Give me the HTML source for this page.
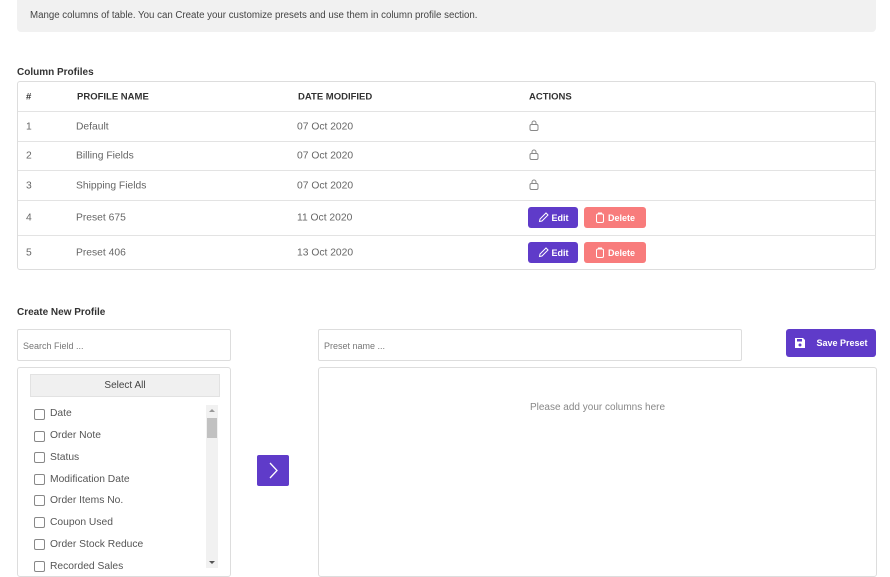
<!DOCTYPE html>
<html><head><style>
*{box-sizing:border-box;margin:0;padding:0}
body{width:890px;height:570px;overflow:hidden;background:#fff;font-family:"Liberation Sans",sans-serif;color:#555;position:relative}
.a{position:absolute}
.top{left:17px;top:0;width:859px;height:32px;background:#f1f1f1;border-radius:0 0 4px 4px;font-size:9.7px;color:#444;padding:10px 0 0 13px}
h4{position:absolute;font-size:10px;color:#333;font-weight:bold}
.tbl{left:17px;top:81px;width:859px;height:189px;border:1px solid #ddd;border-radius:3px}
.row{position:absolute;left:0;width:857px;border-bottom:1px solid #e3e3e3;font-size:10.3px;color:#666}
.row span{position:absolute;top:50%;transform:translateY(-50%)}
.hd{font-weight:bold;color:#333;font-size:9.5px}
.btn{position:absolute;height:21px;border-radius:3px;color:#fff;font-size:9px;font-weight:bold;display:flex;align-items:center;justify-content:center;gap:3px}
.inp{border:1px solid #ddd;border-radius:2px;font-size:9px;color:#777;padding:11px 0 0 5px;height:32px}
.cb{position:absolute;left:16px;width:11px;height:11px;border:1px solid #888;border-radius:2px}
.it{position:absolute;left:32px;font-size:10.3px;color:#555}
</style></head><body>
<div class="a top">Mange columns of table. You can Create your customize presets and use them in column profile section.</div>
<h4 style="left:17px;top:67px">Column Profiles</h4>
<div class="a tbl">
 <div class="row hd" style="top:0;height:30px"><span style="left:8px">#</span><span style="left:59px">PROFILE NAME</span><span style="left:280px">DATE MODIFIED</span><span style="left:511px">ACTIONS</span></div>
 <div class="row" style="top:30px;height:30px"><span style="left:8px">1</span><span style="left:58px">Default</span><span style="left:279px">07 Oct 2020</span><span style="left:511px"><svg width="10" height="11" viewBox="0 0 10 11"><rect x="1" y="4.5" width="8" height="6" rx="1.5" fill="none" stroke="#888"/><path d="M3 4.5V3a2 2 0 0 1 4 0v1.5" fill="none" stroke="#888"/></svg></span></div>
 <div class="row" style="top:60px;height:29px"><span style="left:8px">2</span><span style="left:58px">Billing Fields</span><span style="left:279px">07 Oct 2020</span><span style="left:511px"><svg width="10" height="11" viewBox="0 0 10 11"><rect x="1" y="4.5" width="8" height="6" rx="1.5" fill="none" stroke="#888"/><path d="M3 4.5V3a2 2 0 0 1 4 0v1.5" fill="none" stroke="#888"/></svg></span></div>
 <div class="row" style="top:89px;height:30px"><span style="left:8px">3</span><span style="left:58px">Shipping Fields</span><span style="left:279px">07 Oct 2020</span><span style="left:511px"><svg width="10" height="11" viewBox="0 0 10 11"><rect x="1" y="4.5" width="8" height="6" rx="1.5" fill="none" stroke="#888"/><path d="M3 4.5V3a2 2 0 0 1 4 0v1.5" fill="none" stroke="#888"/></svg></span></div>
 <div class="row" style="top:119px;height:35px"><span style="left:8px">4</span><span style="left:58px">Preset 675</span><span style="left:279px">11 Oct 2020</span></div>
 <div class="row" style="top:154px;height:34px;border:none"><span style="left:8px">5</span><span style="left:58px">Preset 406</span><span style="left:279px">13 Oct 2020</span></div>
</div>
<div class="btn" style="left:528px;top:207px;width:50px;background:#5f3bc9"><svg width="11" height="11" viewBox="0 0 11 11"><path d="M1.5 9.5l.5-2.5 6-6 2 2-6 6z" fill="none" stroke="#fff"/></svg>Edit</div>
<div class="btn" style="left:584px;top:207px;width:62px;background:#f87c7c"><svg width="10" height="11" viewBox="0 0 10 11"><rect x="1.5" y="2" width="7" height="8.5" rx="1.5" fill="none" stroke="#fff"/><path d="M3.5 2V1h3v1" stroke="#fff" fill="none"/></svg>Delete</div>
<div class="btn" style="left:528px;top:242px;width:50px;background:#5f3bc9"><svg width="11" height="11" viewBox="0 0 11 11"><path d="M1.5 9.5l.5-2.5 6-6 2 2-6 6z" fill="none" stroke="#fff"/></svg>Edit</div>
<div class="btn" style="left:584px;top:242px;width:62px;background:#f87c7c"><svg width="10" height="11" viewBox="0 0 10 11"><rect x="1.5" y="2" width="7" height="8.5" rx="1.5" fill="none" stroke="#fff"/><path d="M3.5 2V1h3v1" stroke="#fff" fill="none"/></svg>Delete</div>

<h4 style="left:17px;top:307px">Create New Profile</h4>
<div class="a inp" style="left:17px;top:329px;width:214px">Search Field ...</div>
<div class="a inp" style="left:318px;top:329px;width:424px">Preset name ...</div>
<div class="btn" style="left:786px;top:329px;width:90px;height:28px;background:#5f3bc9;gap:10px"><svg width="12" height="12" viewBox="0 0 12 12"><path d="M1 1h8l2 2v8H1z" fill="#fff"/><rect x="3" y="2" width="5" height="2.5" fill="#5f3bc9"/><circle cx="6" cy="8" r="1.5" fill="#5f3bc9"/></svg>Save Preset</div>

<div class="a" style="left:17px;top:367px;width:214px;height:210px;border:1px solid #ddd;border-radius:3px">
 <div class="a" style="left:12px;top:6px;width:190px;height:23px;background:#f0f0f0;border:1px solid #e2e2e2;font-size:10px;color:#444;text-align:center;line-height:21px">Select All</div>
 <div class="a" style="left:188px;top:37px;width:12px;height:163px;background:#f1f1f1"><div class="a" style="left:1px;top:13px;width:10px;height:20px;background:#c1c1c1"></div><div class="a" style="left:3px;top:4px;border:3px solid transparent;border-bottom-color:#999;border-top:none"></div><div class="a" style="left:3px;bottom:4px;border:3px solid transparent;border-top-color:#555;border-bottom:none"></div></div>
 <div class="cb" style="top:41px"></div><div class="it" style="top:40px">Date</div>
 <div class="cb" style="top:63px"></div><div class="it" style="top:62px">Order Note</div>
 <div class="cb" style="top:84px"></div><div class="it" style="top:84px">Status</div>
 <div class="cb" style="top:106px"></div><div class="it" style="top:106px">Modification Date</div>
 <div class="cb" style="top:127px"></div><div class="it" style="top:127px">Order Items No.</div>
 <div class="cb" style="top:149px"></div><div class="it" style="top:149px">Coupon Used</div>
 <div class="cb" style="top:171px"></div><div class="it" style="top:171px">Order Stock Reduce</div>
 <div class="cb" style="top:193px"></div><div class="it" style="top:193px">Recorded Sales</div>
</div>
<div class="a" style="left:257px;top:455px;width:32px;height:31px;background:#5f3bc9;border-radius:2px"><svg width="32" height="31" viewBox="0 0 32 31"><path d="M13 8l7 7.5-7 7.5" fill="none" stroke="#fff" stroke-width="1.3"/></svg></div>
<div class="a" style="left:318px;top:367px;width:559px;height:210px;border:1px solid #ddd;border-radius:3px;font-size:10px;color:#888;text-align:center;padding-top:34px">Please add your columns here</div>
</body></html>
